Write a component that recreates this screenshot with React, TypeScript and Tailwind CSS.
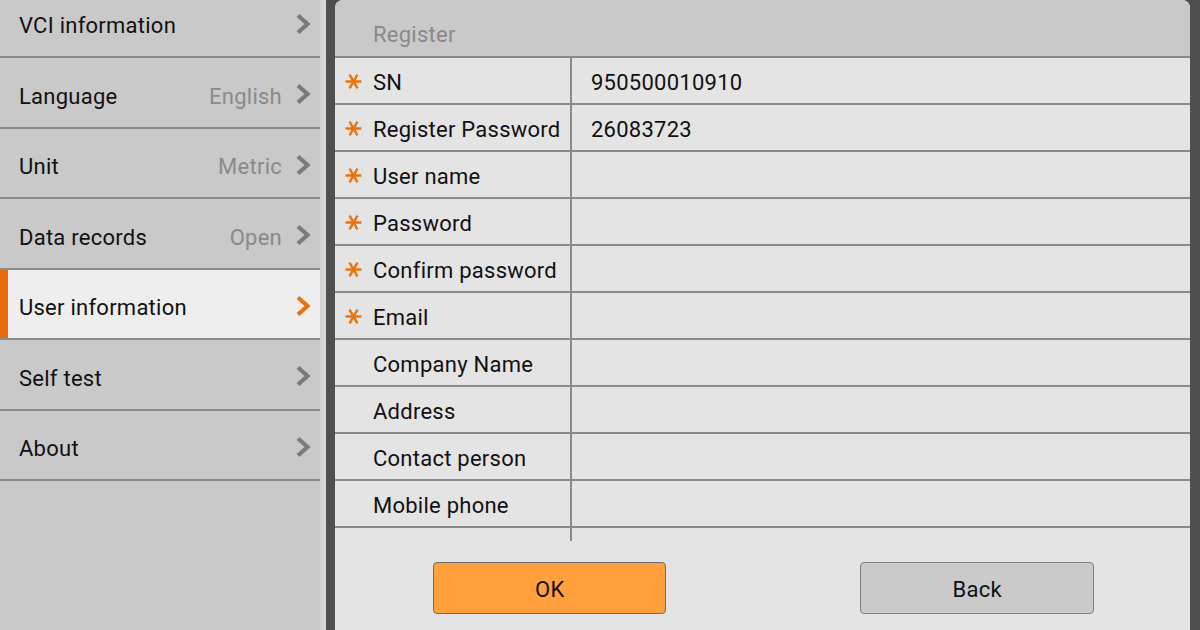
import React from "react";

const Chevron = ({ color }: { color: string }) => (
  <svg width="18" height="22" viewBox="0 0 18 22" fill="none">
    <path d="M4 2.5 L13.5 11 L4 19.5" stroke={color} strokeWidth="4.2" strokeLinejoin="miter" />
  </svg>
);

const Star = () => (
  <svg width="17" height="17" viewBox="0 0 16 16" className="shrink-0">
    <g stroke="#e8730f" strokeWidth="2.3" strokeLinecap="butt">
      <line x1="0.5" y1="8" x2="15.5" y2="8" />
      <line x1="4.25" y1="1.5" x2="11.75" y2="14.5" />
      <line x1="11.75" y1="1.5" x2="4.25" y2="14.5" />
    </g>
  </svg>
);

const menu = [
  { label: "VCI information", value: "" },
  { label: "Language", value: "English" },
  { label: "Unit", value: "Metric" },
  { label: "Data records", value: "Open" },
  { label: "User information", value: "", active: true },
  { label: "Self test", value: "" },
  { label: "About", value: "" },
];

const fields = [
  { label: "SN", req: true, value: "950500010910" },
  { label: "Register Password", req: true, value: "26083723" },
  { label: "User name", req: true, value: "" },
  { label: "Password", req: true, value: "" },
  { label: "Confirm password", req: true, value: "" },
  { label: "Email", req: true, value: "" },
  { label: "Company Name", req: false, value: "" },
  { label: "Address", req: false, value: "" },
  { label: "Contact person", req: false, value: "" },
  { label: "Mobile phone", req: false, value: "" },
];

export default function App() {
  return (
    <div
      className="flex h-[630px] w-[1200px] overflow-hidden bg-[#4d4d4d] text-[22px] tracking-[0.25px] text-[#111]"
      style={{ fontFamily: "Roboto, 'Noto Sans', sans-serif" }}
    >
      {/* Sidebar */}
      <div className="flex w-[320px] shrink-0 flex-col bg-[#c9c9c9]">
        <div className="mt-[-12.5px] flex flex-col">
          {menu.map((m) => (
            <div
              key={m.label}
              className={`flex h-[70.5px] items-center border-b-2 border-[#8a8a8a] ${
                m.active ? "bg-[#eeeeee]" : ""
              }`}
            >
              <div className={`h-full w-[8px] shrink-0 ${m.active ? "bg-[#e86c0c]" : ""}`} />
              <span className="ml-[11px] flex-1 pt-[9px] leading-none">{m.label}</span>
              {m.value && (
                <span className="mr-[12px] pt-[9px] leading-none text-[#8a8a8a]">{m.value}</span>
              )}
              <div className="mr-[6px] flex w-[20px] items-center pt-[4px]">
                <Chevron color={m.active ? "#e8730f" : "#7a7a7a"} />
              </div>
            </div>
          ))}
        </div>
      </div>
      {/* light strip */}
      <div className="w-[6px] shrink-0 bg-gradient-to-r from-[#cfcfcf] to-[#dcdcdc]" />
      {/* dark divider */}
      <div className="w-[9px] shrink-0 bg-[#4f4f4f]" />
      {/* Panel */}
      <div className="flex w-[855px] shrink-0 flex-col overflow-hidden rounded-t-[8px] bg-[#e4e4e4]">
        <div className="flex h-[58px] shrink-0 items-center border-b-2 border-[#8a8a8a] bg-[#c9c9c9] pl-[38px] pt-[12px] text-[#8a8a8a]">
          Register
        </div>
        {fields.map((f) => (
          <div key={f.label} className="flex h-[47px] shrink-0 border-b-2 border-[#8a8a8a]">
            <div className="flex w-[237px] shrink-0 items-center border-r-2 border-[#8a8a8a] pl-[10px]">
              <div className="flex w-[28px] items-center pt-[1px]">{f.req && <Star />}</div>
              <span className="pt-[5px] leading-none">{f.label}</span>
            </div>
            <div className="flex items-center pl-[19px] pt-[5px] leading-none">{f.value}</div>
          </div>
        ))}
        <div className="ml-[235px] h-[13px] w-[2px] bg-[#8a8a8a]" />
        <div className="mt-[21px] flex">
          <div className="flex flex-1 justify-center">
            <button className="ml-[2px] h-[52px] w-[233px] rounded-[4px] border border-[#6d6d6d] bg-[#ffa03c] pt-[2px] text-[22px] text-[#111]">
              OK
            </button>
          </div>
          <div className="flex flex-1 justify-center">
            <button className="ml-[2px] h-[52px] w-[234px] rounded-[4px] border border-[#808080] bg-[#cacaca] pt-[2px] text-[22px] text-[#111]">
              Back
            </button>
          </div>
        </div>
      </div>
      <div className="flex-1 bg-[#4f4f4f]" />
    </div>
  );
}
